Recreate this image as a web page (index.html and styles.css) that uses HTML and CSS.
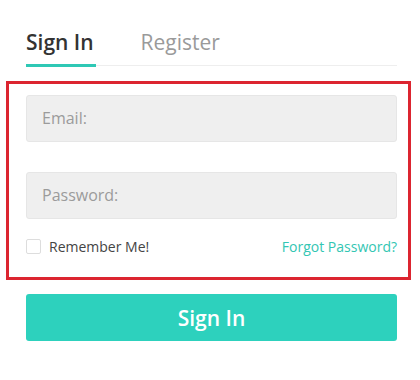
FILE: index.html
```html
<!DOCTYPE html>
<html>
<head>
<meta charset="utf-8">
<link rel="stylesheet" href="styles.css">
</head>
<body>
<div class="page">
  <div class="tabs">
    <div class="tab active">Sign In</div>
    <div class="tab">Register</div>
  </div>
  <form class="form-box">
    <div class="field">Email:</div>
    <div class="field field-pass">Password:</div>
    <div class="options">
      <label class="remember"><span class="check"></span>Remember Me!</label>
      <a class="forgot">Forgot Password?</a>
    </div>
  </form>
  <button class="submit">Sign In</button>
</div>
</body>
</html>
```

FILE: styles.css
```css
* { box-sizing: border-box; }
html, body { margin: 0; padding: 0; background: #fff; }
body { font-family: "Open Sans", "Noto Sans", sans-serif; }
.page {
  width: 371px;
  margin-left: 26px;
  padding-top: 27px;
}
.tabs {
  display: flex;
  gap: 45px;
  border-bottom: 1px solid #eeeeee;
}
.tab {
  font-size: 21px;
  line-height: 30px;
  color: #9a9a9a;
  padding-bottom: 7px;
  border-bottom: 3px solid transparent;
  margin-bottom: -2px;
}
.tab.active {
  color: #333;
  font-weight: 600;
  border-bottom-color: #2ec8b5;
  padding-right: 2px;
}
.form-box {
  margin: 15px -14px 0 -20px;
  border: 3px solid #dc2530;
  padding: 11px 11px 0 17px;
  height: 199px;
}
.field {
  height: 47px;
  background: #efefef;
  border: 1px solid #e6e6e6;
  border-radius: 3px;
  color: #9b9b9b;
  font-size: 16px;
  line-height: 45px;
  padding-left: 15px;
}
.field-pass { margin-top: 30px; }
.options {
  display: flex;
  justify-content: space-between;
  align-items: center;
  margin-top: 19px;
  height: 16px;
  font-size: 14px;
}
.remember {
  display: flex;
  align-items: center;
  color: #444;
}
.check {
  width: 15px;
  height: 15px;
  border: 1px solid #dddddd;
  border-radius: 2px;
  margin-right: 8px;
  background: #fff;
}
.forgot { color: #33c6b3; }
.submit {
  display: block;
  width: 100%;
  margin-top: 14px;
  height: 47px;
  border: none;
  border-radius: 3px;
  background: #2dd1bd;
  color: #fff;
  font-family: "Open Sans", "Noto Sans", sans-serif;
  font-size: 21px;
  font-weight: 600;
}
```
